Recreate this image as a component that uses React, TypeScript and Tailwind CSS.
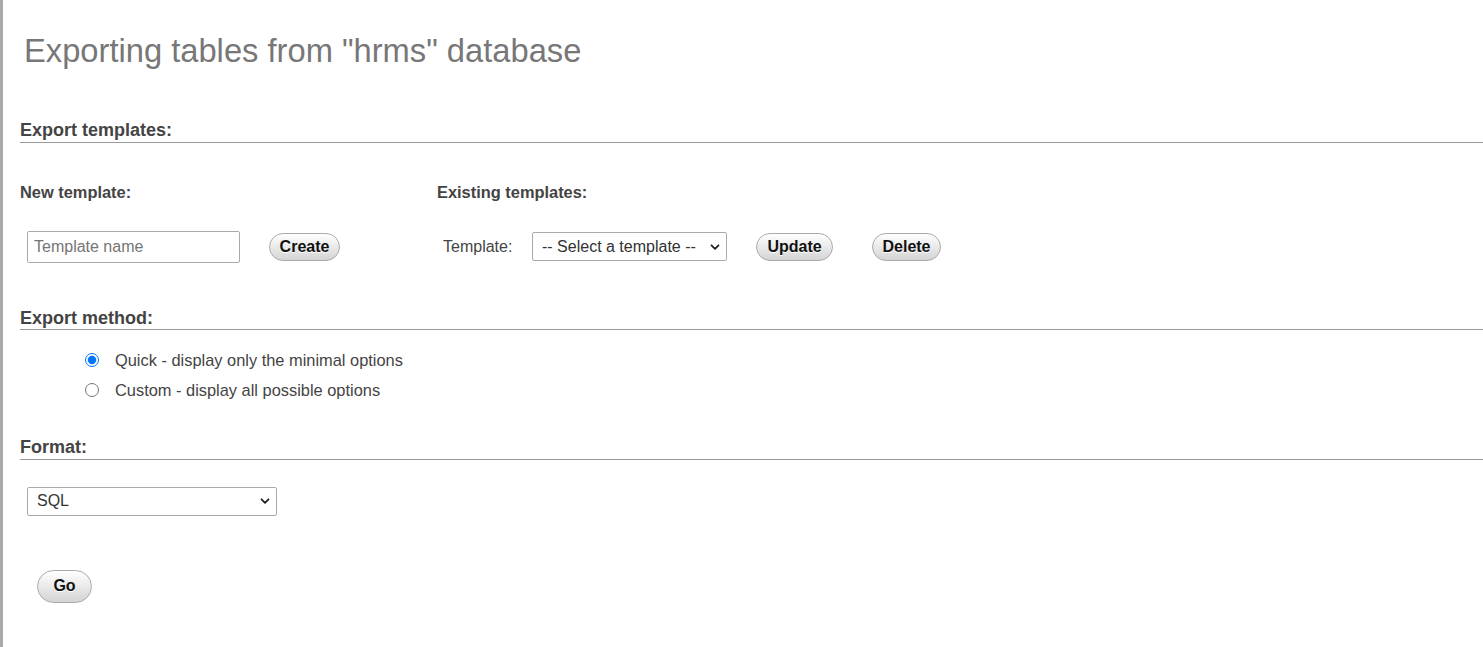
import React from 'react';

const btn =
  'rounded-full border border-[#aaa] bg-gradient-to-b from-white to-[#d4d4d4] font-bold text-[16px] leading-[18px] text-[#111] [text-shadow:0_1px_0_#fff]';

function Chevron() {
  return (
    <svg width="12" height="12" viewBox="0 0 12 12" className="pointer-events-none absolute right-[6px] top-1/2 -translate-y-1/2">
      <path d="M2.5 4.3 L6 7.8 L9.5 4.3" fill="none" stroke="#222" strokeWidth="1.8" strokeLinecap="round" strokeLinejoin="round" />
    </svg>
  );
}

function Select({ value, width, options }: { value: string; width: string; options: string[] }) {
  return (
    <div className={`relative ${width}`}>
      <select
        defaultValue={value}
        className="h-[29px] w-full appearance-none rounded-[2px] border border-[#aaa] bg-white pl-[9px] pr-[24px] text-[16px] text-[#333] outline-none"
      >
        {options.map((o) => (
          <option key={o}>{o}</option>
        ))}
      </select>
      <Chevron />
    </div>
  );
}

function SectionHeader({ children, className = '' }: { children: React.ReactNode; className?: string }) {
  return (
    <h3 className={`border-b border-[#999] text-[18px] font-bold leading-[21.6px] text-[#444] ${className}`}>
      {children}
    </h3>
  );
}

export default function App() {
  return (
    <div className="h-[647px] w-full overflow-hidden border-l-[3px] border-[#aaa] bg-white font-['Liberation_Sans',Arial,sans-serif] text-[#444]">
      <div className="pl-[17px] pt-[31px]">
        <h2 className="ml-[4px] text-[32.7px] font-normal leading-[40px] text-[#777]">
          Exporting tables from "hrms" database
        </h2>

        {/* Export templates */}
        <SectionHeader className="mt-[49px]">Export templates:</SectionHeader>

        <div className="flex">
          <div className="w-[417px] shrink-0">
            <h4 className="mt-[39px] text-[16.4px] font-bold leading-[20px]">New template:</h4>
            <div className="mt-[29px] flex items-center">
              <input
                type="text"
                placeholder="Template name"
                className="ml-[7px] h-[32px] w-[213px] rounded-[2px] border border-[#aaa] bg-white px-[6px] text-[16px] text-[#333] outline-none placeholder:text-[#757575]"
              />
              <button className={`${btn} ml-[29px] h-[28px] w-[71px]`}>Create</button>
            </div>
          </div>

          <div>
            <h4 className="mt-[39px] text-[16.4px] font-bold leading-[20px]">Existing templates:</h4>
            <div className="mt-[29px] flex h-[32px] items-center">
              <label className="ml-[6px] w-[89px] text-[16px]">Template:</label>
              <Select value="-- Select a template --" width="w-[195px]" options={['-- Select a template --']} />
              <button className={`${btn} ml-[29px] h-[28px] w-[77px]`}>Update</button>
              <button className={`${btn} ml-[39px] h-[28px] w-[69px]`}>Delete</button>
            </div>
          </div>
        </div>

        {/* Export method */}
        <SectionHeader className="mt-[45px]">Export method:</SectionHeader>

        <ul className="mt-[15px] pl-[65px] text-[16.4px]">
          <li className="flex h-[30px] items-center">
            <input type="radio" name="method" defaultChecked className="m-0 h-[14px] w-[14px] accent-[#0075ff]" />
            <label className="ml-[16px]">Quick - display only the minimal options</label>
          </li>
          <li className="flex h-[30px] items-center">
            <input type="radio" name="method" className="m-0 h-[14px] w-[14px]" />
            <label className="ml-[16px]">Custom - display all possible options</label>
          </li>
        </ul>

        {/* Format */}
        <SectionHeader className="mt-[32px]">Format:</SectionHeader>

        <div className="mt-[27px] ml-[7px]">
          <Select value="SQL" width="w-[250px]" options={['SQL', 'CSV', 'JSON', 'XML']} />
        </div>

        <button className={`${btn} ml-[17px] mt-[54px] h-[33px] w-[55px]`}>Go</button>
      </div>
    </div>
  );
}
